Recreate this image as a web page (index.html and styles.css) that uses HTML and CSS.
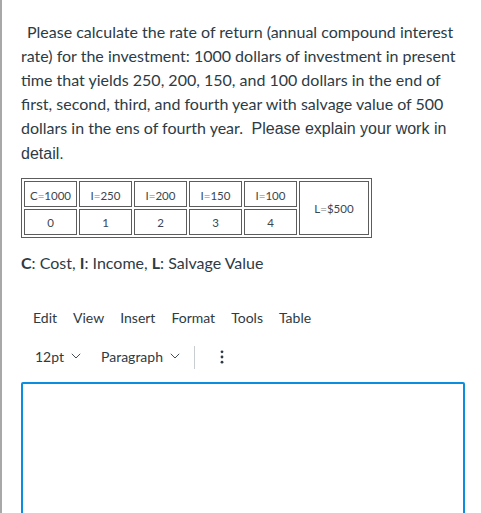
FILE: index.html
```html
<!DOCTYPE html>
<html lang="en">
<head>
<meta charset="utf-8">
<title>Question</title>
<link rel="stylesheet" href="styles.css">
</head>
<body>
<div class="page">
  <div class="content">
    <p class="question">Please calculate the rate of return (annual compound interest rate) for the investment: 1000 dollars of investment in present time that yields 250, 200, 150, and 100 dollars in the end of first, second, third, and fourth year with salvage value of 500 dollars in the ens of fourth year. <span class="arial">&nbsp;Please explain your work in detail.</span></p>

    <table class="cashflow">
      <tr class="top">
        <td>C<span class="eq">=</span>1000</td>
        <td>I<span class="eq">=</span>250</td>
        <td>I<span class="eq">=</span>200</td>
        <td>I<span class="eq">=</span>150</td>
        <td>I<span class="eq">=</span>100</td>
        <td class="salvage" rowspan="2">L<span class="eq">=</span>$500</td>
      </tr>
      <tr class="bottom">
        <td>0</td>
        <td>1</td>
        <td>2</td>
        <td>3</td>
        <td>4</td>
      </tr>
    </table>

    <p class="legend"><b>C</b>: Cost, <b>I</b>: Income, <b>L</b>: Salvage Value</p>

    <div class="menubar">
      <span class="menu">Edit</span>
      <span class="menu">View</span>
      <span class="menu">Insert</span>
      <span class="menu">Format</span>
      <span class="menu">Tools</span>
      <span class="menu">Table</span>
    </div>

    <div class="toolbar">
      <span class="tool size">12pt<svg class="chev" width="10" height="6" viewBox="0 0 10 6"><polyline points="0.8,0.8 5,5 9.2,0.8" fill="none" stroke="#2d3b45" stroke-width="0.9"/></svg></span>
      <span class="tool block">Paragraph<svg class="chev" width="10" height="6" viewBox="0 0 10 6"><polyline points="0.8,0.8 5,5 9.2,0.8" fill="none" stroke="#2d3b45" stroke-width="0.9"/></svg></span>
      <span class="divider"></span>
      <svg class="more" width="4" height="14" viewBox="0 0 4 14"><circle cx="2" cy="1.8" r="1.4" fill="#2d3b45"/><circle cx="2" cy="7" r="1.4" fill="#2d3b45"/><circle cx="2" cy="12.2" r="1.4" fill="#2d3b45"/></svg>
    </div>

    <div class="editor"></div>
  </div>
</div>
</body>
</html>
```

FILE: styles.css
```css
html, body {
  margin: 0;
  padding: 0;
  background: #ffffff;
}

body {
  font-family: Lato, "Noto Sans", sans-serif;
  color: #2d3b45;
}

.page {
  border-left: 2px solid #a8a8a8;
  min-height: 100vh;
  box-sizing: border-box;
  padding: 20px 16px 0 19px;
}

.content {
  width: 444px;
}

.question {
  margin: 0;
  font-size: 16px;
  line-height: 24px;
  text-indent: 6px;
}

.arial {
  font-family: "Liberation Sans", Arial, sans-serif;
  color: #2f3a44;
}

.cashflow {
  margin-top: 12px;
  border: 1px solid #5c5c5c;
  border-spacing: 2px;
  font-size: 11.5px;
}

.cashflow td {
  border: 1px solid #5c5c5c;
  width: 51px;
  height: 24px;
  padding: 0;
  text-align: center;
  vertical-align: middle;
  color: #3a4650;
}

.cashflow .top td {
  padding-top: 3px;
  height: 21px;
}

.cashflow td.salvage {
  width: 68px;
  padding-top: 0;
}

.eq {
  color: #b3b3b3;
}

.legend {
  margin: 13px 0 0;
  font-size: 16px;
  line-height: 24px;
}

.legend b {
  font-weight: 700;
}

.menubar {
  display: flex;
  gap: 16px;
  margin-top: 33px;
  padding-left: 12px;
  font-size: 14px;
  line-height: 20px;
}

.toolbar {
  display: flex;
  align-items: center;
  height: 24px;
  margin-top: 17px;
  padding-left: 14px;
  font-size: 14px;
  line-height: 20px;
}

.tool {
  display: inline-flex;
  align-items: center;
}

.chev {
  margin-left: 7px;
  margin-top: -2px;
}

.block {
  margin-left: 20px;
}

.divider {
  width: 1px;
  height: 23px;
  background: #c7cdd1;
  margin-left: 14px;
}

.more {
  margin-left: 25px;
}

.editor {
  margin-top: 13px;
  height: 220px;
  border: 2px solid #0b8de0;
  border-radius: 2px;
}
```
